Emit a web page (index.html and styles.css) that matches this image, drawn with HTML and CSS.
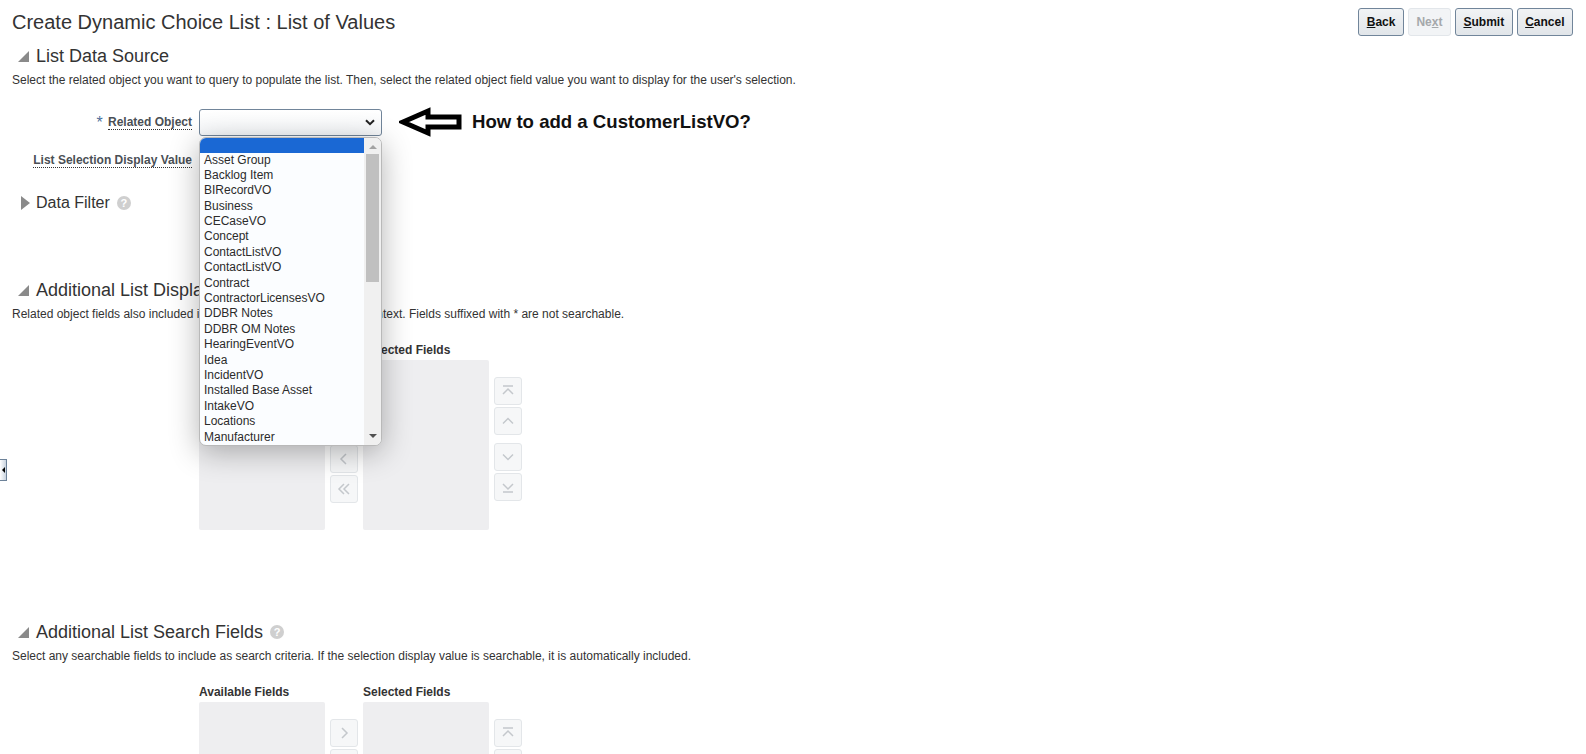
FILE: index.html
```html
<!DOCTYPE html>
<html lang="en">
<head>
  <meta charset="UTF-8" />
  <title>Create Dynamic Choice List : List of Values</title>
  <link rel="stylesheet" href="styles.css">
</head>
<body>

  <div class="splitter"><span class="splitter-arrow"></span></div>

  <header class="page-head">
    <h1>Create Dynamic Choice List : List of Values</h1>
    <div class="train">
      <button class="btn"><u>B</u>ack</button>
      <button class="btn btn-off">Ne<u>x</u>t</button>
      <button class="btn"><u>S</u>ubmit</button>
      <button class="btn"><u>C</u>ancel</button>
    </div>
  </header>

  <section class="source">
    <h2><span class="tri-open"></span>List Data Source</h2>
    <p class="desc">Select the related object you want to query to populate the list. Then, select the related object field value you want to display for the user's selection.</p>

    <div class="form-row first">
      <label class="form-label"><sup>*</sup> <span>Related Object</span></label>
      <div class="select-wrap">
        <div class="select">
          <svg width="10" height="7" viewBox="0 0 10 7"><path d="M1 1.2 5 5.2 9 1.2" fill="none" stroke="#222" stroke-width="2"/></svg>
        </div>
        <div class="popup">
          <ul class="options">
            <li class="picked"></li>
            <li>Asset Group</li>
            <li>Backlog Item</li>
            <li>BIRecordVO</li>
            <li>Business</li>
            <li>CECaseVO</li>
            <li>Concept</li>
            <li>ContactListVO</li>
            <li>ContactListVO</li>
            <li>Contract</li>
            <li>ContractorLicensesVO</li>
            <li>DDBR Notes</li>
            <li>DDBR OM Notes</li>
            <li>HearingEventVO</li>
            <li>Idea</li>
            <li>IncidentVO</li>
            <li>Installed Base Asset</li>
            <li>IntakeVO</li>
            <li>Locations</li>
            <li>Manufacturer</li>
          </ul>
          <div class="scrollbar">
            <span class="sb-up"></span>
            <span class="sb-thumb"></span>
            <span class="sb-down"></span>
          </div>
        </div>
      </div>
      <div class="note">
        <svg width="64" height="30" viewBox="0 0 64 30"><path d="M4 15 29 4V10H60V20H29V26Z" fill="#fff" stroke="#000" stroke-width="5"/></svg>
        <strong>How to add a CustomerListVO?</strong>
      </div>
    </div>

    <div class="form-row second">
      <label class="form-label"><span class="strong">List Selection Display Value</span></label>
      <div class="select"></div>
    </div>
  </section>

  <section class="filter">
    <h2 class="small"><span class="tri-closed"></span>Data Filter <span class="help">?</span></h2>
  </section>

  <section class="display">
    <h2><span class="tri-open"></span>Additional List Display Fields</h2>
    <p class="desc">Related object fields also included in the list can be displayed in a context. Fields suffixed with * are not searchable.</p>

    <div class="shuttle">
      <div class="shuttle-col">
        <h4>Available Fields</h4>
        <div class="shuttle-list"></div>
      </div>
      <div class="shuttle-move">
        <button class="ico"><svg width="14" height="14" viewBox="0 0 14 14"><path d="M5 2 10 7 5 12"/></svg></button>
        <button class="ico"><svg width="14" height="14" viewBox="0 0 14 14"><path d="M2 2 7 7 2 12M7 2 12 7 7 12"/></svg></button>
        <button class="ico back"><svg width="14" height="14" viewBox="0 0 14 14"><path d="M9 2 4 7 9 12"/></svg></button>
        <button class="ico"><svg width="14" height="14" viewBox="0 0 14 14"><path d="M7 2 2 7 7 12M12 2 7 7 12 12"/></svg></button>
      </div>
      <div class="shuttle-col">
        <h4>Selected Fields</h4>
        <div class="shuttle-list"></div>
      </div>
      <div class="shuttle-order">
        <button class="ico"><svg width="14" height="14" viewBox="0 0 14 14"><path d="M2 2H12M2 10 7 5 12 10"/></svg></button>
        <button class="ico"><svg width="14" height="14" viewBox="0 0 14 14"><path d="M2 9.500 7 4.500 12 9.500"/></svg></button>
        <button class="ico down"><svg width="14" height="14" viewBox="0 0 14 14"><path d="M2 4.500 7 9.500 12 4.500"/></svg></button>
        <button class="ico"><svg width="14" height="14" viewBox="0 0 14 14"><path d="M2 4 7 9 12 4M2 12H12"/></svg></button>
      </div>
    </div>
  </section>

  <section class="search">
    <h2><span class="tri-open"></span>Additional List Search Fields <span class="help">?</span></h2>
    <p class="desc">Select any searchable fields to include as search criteria. If the selection display value is searchable, it is automatically included.</p>

    <div class="shuttle">
      <div class="shuttle-col">
        <h4>Available Fields</h4>
        <div class="shuttle-list"></div>
      </div>
      <div class="shuttle-move">
        <button class="ico"><svg width="14" height="14" viewBox="0 0 14 14"><path d="M5 2 10 7 5 12"/></svg></button>
        <button class="ico"><svg width="14" height="14" viewBox="0 0 14 14"><path d="M2 2 7 7 2 12M7 2 12 7 7 12"/></svg></button>
      </div>
      <div class="shuttle-col">
        <h4>Selected Fields</h4>
        <div class="shuttle-list"></div>
      </div>
      <div class="shuttle-order">
        <button class="ico"><svg width="14" height="14" viewBox="0 0 14 14"><path d="M2 2H12M2 10 7 5 12 10"/></svg></button>
        <button class="ico"><svg width="14" height="14" viewBox="0 0 14 14"><path d="M2 9.500 7 4.500 12 9.500"/></svg></button>
      </div>
    </div>
  </section>

</body>
</html>
```

FILE: styles.css
```css
html, body {
  height: 754px;
  overflow: hidden;
}
body {
  font-family: "Liberation Sans", Arial, sans-serif;
  background: #fff;
  color: #333;
  margin: 0;
  padding: 0 13px 0 12px;
  position: relative;
}

/* page title + train buttons */
.page-head {
  display: flex;
  justify-content: space-between;
  align-items: flex-start;
  height: 45px;
}
h1 {
  margin: 10px 0 0;
  font-size: 20px;
  line-height: 24px;
  font-weight: normal;
}
.train {
  display: flex;
  gap: 4px;
  margin-top: 8px;
}
.btn {
  font-family: inherit;
  font-size: 12px;
  font-weight: bold;
  height: 28px;
  padding: 0 7.5px;
  color: #111;
  background: linear-gradient(#f1f3f5, #e1e5e9);
  border: 1px solid #71859a;
  border-radius: 3px;
}
.btn-off {
  color: #a5a8ab;
  background: #f2f4f6;
  border-color: #e2e6ea;
}

/* sections */
h2 {
  margin: 0;
  font-size: 18px;
  line-height: 22px;
  font-weight: normal;
  display: flex;
  align-items: center;
  padding-left: 6px;
}
h2.small {
  font-size: 16px;
}
.tri-open {
  width: 0;
  height: 0;
  border-style: solid;
  border-width: 0 0 11px 11px;
  border-color: transparent transparent #8a8a8a transparent;
  margin-right: 7px;
}
.tri-closed {
  width: 0;
  height: 0;
  border-style: solid;
  border-width: 7px 0 7px 9px;
  border-color: transparent transparent transparent #8a8a8a;
  margin: 0 6px 0 3px;
}
.help {
  width: 14px;
  height: 14px;
  border-radius: 50%;
  background: #cfcfcf;
  color: #fff;
  font-size: 11px;
  line-height: 14px;
  font-weight: bold;
  text-align: center;
  margin-left: 7px;
}
.desc {
  margin: 6px 0 0;
  font-size: 12px;
  line-height: 14px;
}
.form-row {
  display: flex;
  align-items: center;
}
.form-row.first {
  margin-top: 20px;
}
.form-row.second {
  margin-top: 9px;
}
.form-label {
  width: 180px;
  text-align: right;
  font-size: 12px;
  font-weight: bold;
  color: #4a4f55;
  margin-right: 7px;
  flex: none;
}
.form-label span {
  border-bottom: 1px dotted #333;
}
.form-label sup {
  color: #4d6f9c;
  font-size: 16px;
  font-weight: normal;
  line-height: 0;
  vertical-align: -2px;
  margin-right: 2px;
}
.select-wrap {
  position: relative;
}
.select {
  width: 183px;
  height: 27px;
  box-sizing: border-box;
  border: 1px solid #71859a;
  border-radius: 3px;
  background: linear-gradient(#fff, #f6f8fa);
  display: flex;
  align-items: center;
  justify-content: flex-end;
  padding-right: 6px;
}

/* open dropdown list lies over the rest of the form */
.popup {
  position: absolute;
  top: 28px;
  left: 0;
  z-index: 5;
  width: 183px;
  height: 309px;
  box-sizing: border-box;
  background: #fbfdff;
  border: 1px solid #b9b9b9;
  border-radius: 7px;
  box-shadow: 0 6px 30px rgba(0, 0, 0, 0.3);
  display: flex;
  overflow: hidden;
  color: #2b2b2b;
}
.options {
  list-style: none;
  margin: 0;
  padding: 0;
  flex: 1;
  font-size: 12px;
}
.options li {
  height: 15.4px;
  line-height: 15.4px;
  padding-left: 4px;
  white-space: nowrap;
}
.options li.picked {
  height: 15px;
  background: #1a68d4;
}
.scrollbar {
  width: 17px;
  background: #f0f0f0;
  display: flex;
  flex-direction: column;
  align-items: center;
  position: relative;
}
.sb-up {
  width: 0;
  height: 0;
  border-style: solid;
  border-width: 0 4px 4px 4px;
  border-color: transparent transparent #a3a3a3 transparent;
  margin: 7px 0 5px;
}
.sb-thumb {
  width: 13px;
  height: 128px;
  background: #c0c0c0;
}
.sb-down {
  width: 0;
  height: 0;
  border-style: solid;
  border-width: 4px 4px 0 4px;
  border-color: #505050 transparent transparent transparent;
  margin-top: auto;
  margin-bottom: 7px;
}
.note {
  display: flex;
  align-items: center;
  margin-left: 17px;
  color: #111;
}
.note svg {
  margin-right: 9px;
}
.note strong {
  font-size: 18.6px;
}

.filter {
  margin-top: 19px;
}
.display {
  margin-top: 65px;
}
.search {
  margin-top: 91px;
}

/* shuttle */
.shuttle {
  display: flex;
  margin: 22px 0 0 187px;
}
.shuttle-col {
  width: 126px;
  flex: none;
}
.shuttle-col h4 {
  margin: 0 0 3px;
  font-size: 12px;
  line-height: 14px;
}
.shuttle-list {
  height: 170px;
  background: #eeeef0;
  border-radius: 2px;
}
.shuttle-move, .shuttle-order {
  display: flex;
  flex-direction: column;
  gap: 2px;
  padding-top: 34px;
}
.shuttle-move {
  margin: 0 5px;
}
.shuttle-order {
  margin-left: 5px;
}
.ico {
  width: 28px;
  height: 28px;
  padding: 0;
  display: flex;
  align-items: center;
  justify-content: center;
  background: #f6f7f8;
  border: 1px solid #e3e6e9;
  border-radius: 3px;
}
.ico svg path {
  fill: none;
  stroke: #c4c8cc;
  stroke-width: 1.500;
}
.ico.back {
  margin-top: 8px;
}
.ico.down {
  margin-top: 6px;
}

/* collapse handle on the left edge */
.splitter {
  position: absolute;
  left: 0;
  top: 459px;
  width: 7px;
  height: 22px;
  box-sizing: border-box;
  background: linear-gradient(to right, #fff, #c9d3df);
  border: 1px solid #6d8299;
  border-left: 0;
  display: flex;
  align-items: center;
  justify-content: center;
}
.splitter-arrow {
  width: 0;
  height: 0;
  border-style: solid;
  border-width: 3px 3px 3px 0;
  border-color: transparent #000 transparent transparent;
}
```
